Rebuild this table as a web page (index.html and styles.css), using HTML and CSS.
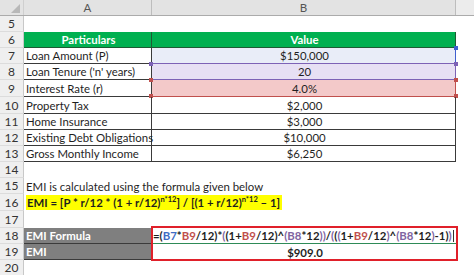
FILE: index.html
```html
<!DOCTYPE html>
<html>
<head>
<meta charset="utf-8">
<link rel="stylesheet" href="styles.css">
</head>
<body>
<div class="sheet">
  <div class="row hdr">
    <div class="corner"><span class="tri"></span></div>
    <div class="colh">A</div>
    <div class="colh">B</div>
    <div class="colh colc"></div>
  </div>
  <div class="row"><div class="rn">5</div><div class="c"></div><div class="c"></div><div class="c"></div></div>
  <div class="row"><div class="rn">6</div><div class="c tb th">Particulars</div><div class="c tb th thb">Value</div><div class="c"></div></div>
  <div class="row"><div class="rn">7</div><div class="c tb">Loan Amount (P)</div><div class="c tb val ref-blue">$150,000<span class="h h-tr blue"></span></div><div class="c"></div></div>
  <div class="row"><div class="rn">8</div><div class="c tb">Loan Tenure ('n' years)</div><div class="c tb val ref-purple">20<span class="h h-tl purple"></span><span class="h h-tr purple"></span></div><div class="c"></div></div>
  <div class="row tall"><div class="rn">9</div><div class="c tb">Interest Rate (r)</div><div class="c tb val ref-red">4.0%<span class="h h-tl red"></span><span class="h h-tr red"></span><span class="h h-bl red"></span><span class="h h-br red"></span></div><div class="c"></div></div>
  <div class="row tall"><div class="rn">10</div><div class="c tb">Property Tax</div><div class="c tb val">$2,000</div><div class="c"></div></div>
  <div class="row"><div class="rn">11</div><div class="c tb">Home Insurance</div><div class="c tb val">$3,000</div><div class="c"></div></div>
  <div class="row"><div class="rn">12</div><div class="c tb">Existing Debt Obligations</div><div class="c tb val">$10,000</div><div class="c"></div></div>
  <div class="row"><div class="rn">13</div><div class="c tb">Gross Monthly Income</div><div class="c tb val">$6,250</div><div class="c"></div></div>
  <div class="row"><div class="rn">14</div><div class="c"></div><div class="c"></div><div class="c"></div></div>
  <div class="row"><div class="rn">15</div><div class="c span">EMI is calculated using the formula given below</div></div>
  <div class="row tall"><div class="rn">16</div><div class="c span"><span class="yl">EMI = [P * r/12 * (1 + r/12)<sup>n*12</sup>] / [(1 + r/12)<sup>n*12</sup> – 1]</span></div></div>
  <div class="row tall"><div class="rn">17</div><div class="c"></div><div class="c"></div><div class="c"></div></div>
  <div class="row"><div class="rn">18</div><div class="c dk">EMI Formula</div><div class="c fx">=(<span class="cb">B7</span>*<span class="cr">B9</span>/12)*<span class="pp">(</span><span class="pg">(</span>1+<span class="cr">B9</span>/12<span class="pg">)</span>^<span class="pp">(</span><span class="cp">B8</span>*12<span class="pp">)</span><span class="pp">)</span>/<span class="pp">(</span><span class="pg">(</span><span class="pp">(</span>1+<span class="cr">B9</span>/12<span class="pp">)</span>^<span class="pp">(</span><span class="cp">B8</span>*12<span class="pp">)</span>-1<span class="pg">)</span><span class="pp">)</span><span class="caret"></span></div><div class="c"></div></div>
  <div class="row"><div class="rn">19</div><div class="c dk">EMI</div><div class="c emi">$909.0</div><div class="c"></div></div>
  <div class="row last"><div class="rn">20</div><div class="c"></div><div class="c"></div><div class="c"></div></div>
  <div class="redbox"></div>
</div>
</body>
</html>
```
FILE: styles.css
```css
html, body {
  margin: 0;
  padding: 0;
  background: #ffffff;
}
.sheet {
  position: relative;
  width: 474px;
  height: 275px;
  overflow: hidden;
  font-family: Lato, "Noto Sans", sans-serif;
  font-size: 11.4px;
  color: #1f1f1f;
}
.row {
  display: grid;
  grid-template-columns: 24px 128px 304px 18px;
  height: 16px;
}
.row.tall { height: 17px; }
.row.last { height: 15px; }
.hdr {
  height: 16px;
  background: #e3e3e3;
  border-bottom: 1px solid #ababab;
  box-sizing: border-box;
}
.corner {
  position: relative;
  border-right: 1px solid #cfcfcf;
}
.tri {
  position: absolute;
  right: 3px;
  bottom: 2px;
  width: 0;
  height: 0;
  border-left: 9px solid transparent;
  border-bottom: 9px solid #b8b8b8;
}
.colh {
  display: flex;
  align-items: center;
  justify-content: center;
  color: #555;
  font-size: 11.5px;
  border-right: 1px solid #bdbdbd;
}
.colc { background: #ececec; border-right: none; }
.rn {
  background: #efefef;
  color: #333;
  display: flex;
  align-items: center;
  justify-content: center;
  font-size: 12px;
  border-right: 1px solid #c8c8c8;
  border-bottom: 1px solid #dcdcdc;
  box-sizing: border-box;
}
.c {
  position: relative;
  display: flex;
  align-items: center;
  padding-left: 2px;
  white-space: nowrap;
  box-sizing: border-box;
}
.tb {
  border-right: 1px solid #3a3a3a;
  border-bottom: 1px solid #3a3a3a;
}
.th {
  background: #00b050;
  color: #ffffff;
  font-weight: 700;
  justify-content: center;
  border-color: #1d5a33;
}
.thb { border-right-color: #1d5a33; }
.val { justify-content: center; }
.ref-blue { background: #e9edf8; border-right: 1px solid #3f5fcf; border-bottom: 1px solid #7d62b6; }
.ref-purple { background: #e7e0f4; border-right: 1px solid #7d62b6; border-bottom: 1px solid #7d62b6; }
.ref-red { background: #f3c9c9; border-right: 1px solid #c0504d; border-bottom: 1px solid #c0504d; }
.h {
  position: absolute;
  width: 4px;
  height: 4px;
}
.h-tr { right: -3px; top: -2px; }
.h-tl { left: -3px; top: -2px; }
.h-bl { left: -3px; bottom: -2px; }
.h-br { right: -3px; bottom: -2px; }
.h.blue { background: #3f5fcf; }
.h.purple { background: #7d62b6; }
.h.red { background: #c0504d; }
.span { grid-column: 2 / 5; }
.yl {
  background: #ffff00;
  font-weight: 700;
  padding: 1px 2px 1px 1px;
}
sup {
  font-size: 7.5px;
  vertical-align: 5px;
  line-height: 0;
}
.dk {
  background: #7f7f7f;
  color: #ffffff;
  font-weight: 700;
  border-bottom: 1px solid #3a3a3a;
}
.fx {
  font-weight: 700;
  overflow: visible;
  border-bottom: 1px solid #2e8b57;
  padding-left: 1px;
}
.emi { justify-content: center; font-weight: 700; }
.cb { color: #3d6cc4; }
.cr { color: #c0504d; }
.cp { color: #8064a2; }
.pp { color: #8064a2; }
.pg { color: #1f1f1f; }
.caret {
  display: inline-block;
  width: 1px;
  height: 12px;
  background: #333;
  margin-left: 1px;
}
.redbox {
  position: absolute;
  left: 151px;
  top: 226px;
  width: 307px;
  height: 35px;
  border: 2px solid #e0202a;
  box-sizing: border-box;
  pointer-events: none;
}
```
